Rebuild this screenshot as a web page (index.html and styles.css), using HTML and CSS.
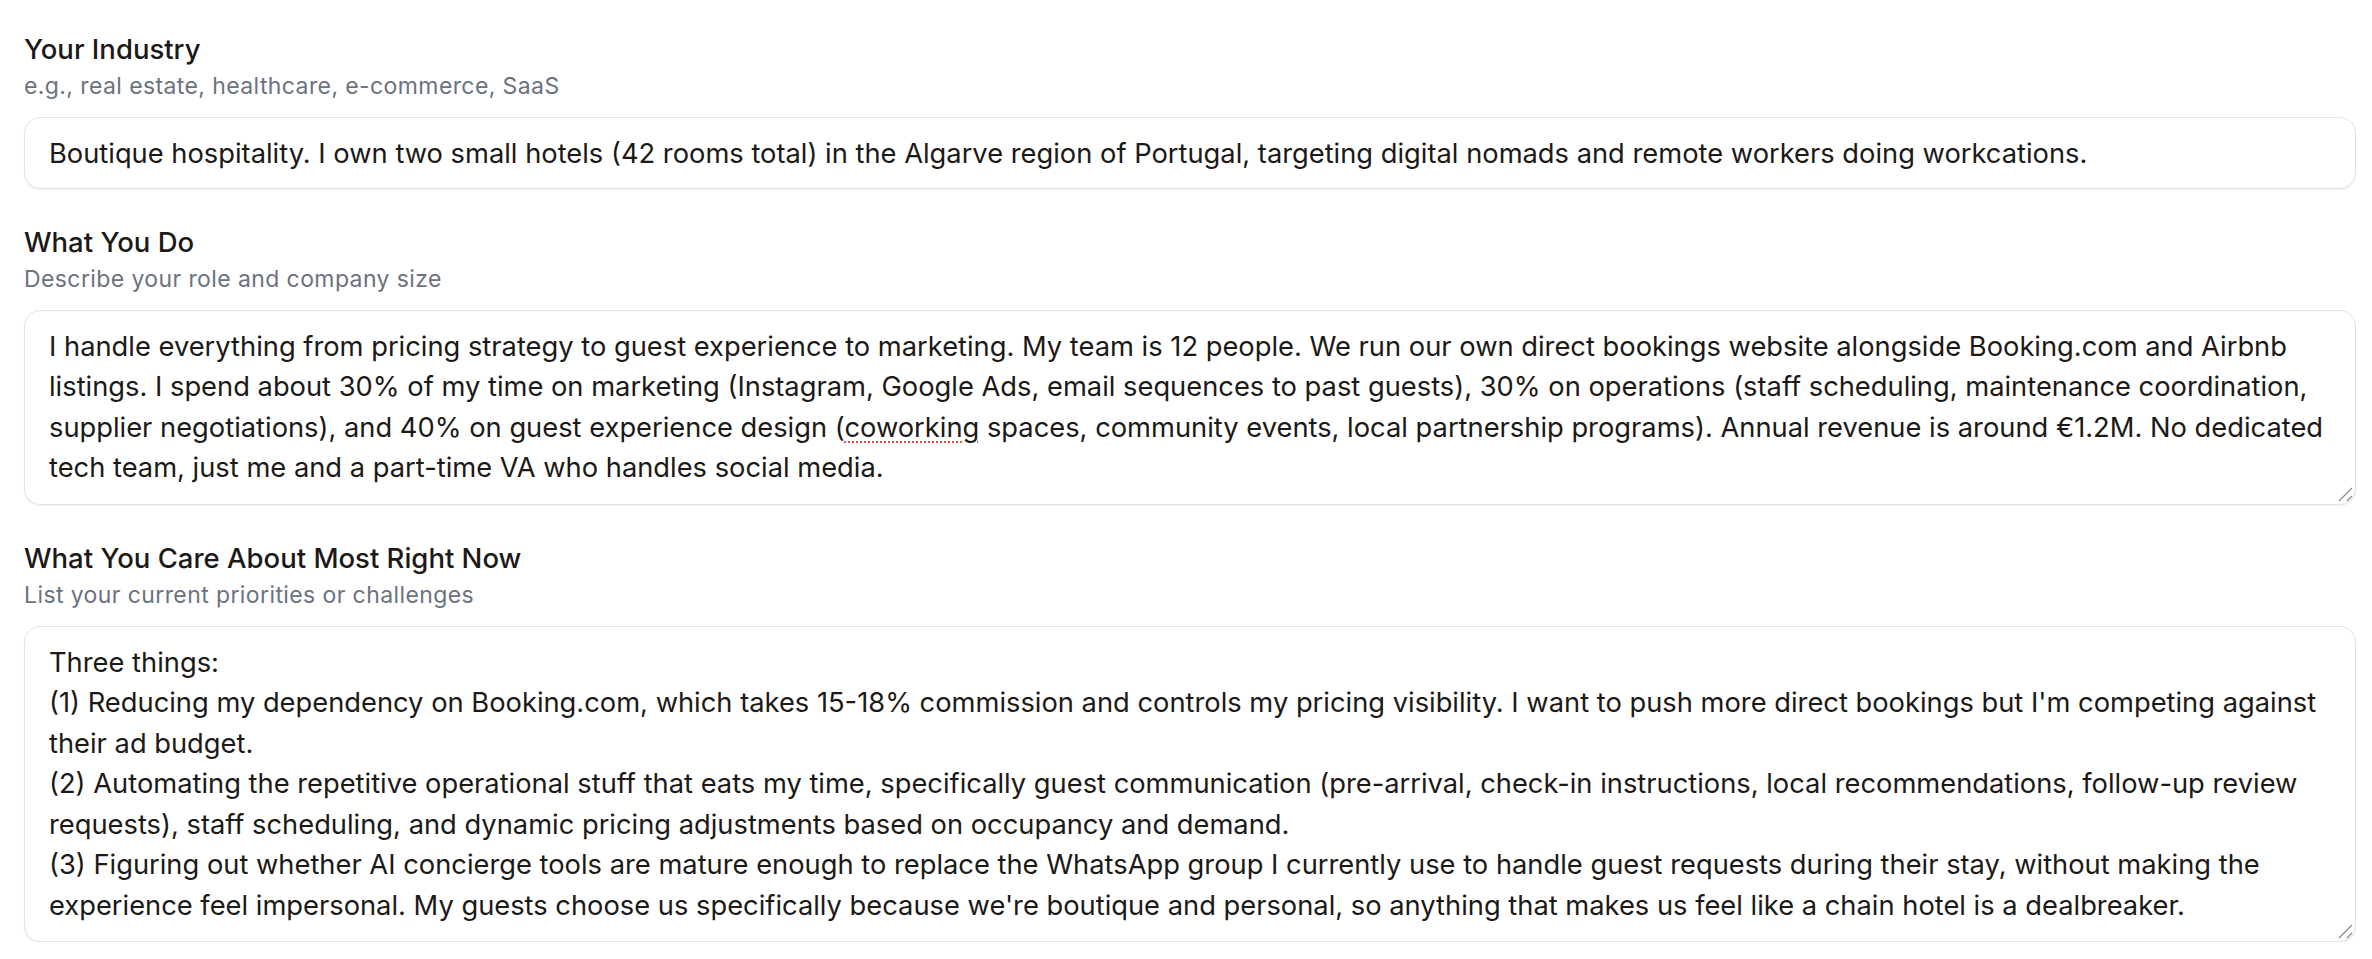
FILE: index.html
```html
<!DOCTYPE html>
<html lang="en">
<head>
    <meta charset="UTF-8">
    <meta name="viewport" content="width=device-width, initial-scale=1.0">
    <title>Your Profile</title>
    <link rel="stylesheet" href="styles.css">
</head>
<body>

<div class="form">
    <div class="field">
        <label class="field-label">Your Industry</label>
        <p class="field-hint">e.g., real estate, healthcare, e-commerce, SaaS</p>
        <div class="field-box">Boutique hospitality. I own two small hotels (42 rooms total) in the Algarve region of Portugal, targeting digital nomads and remote workers doing workcations.</div>
    </div>

    <div class="field">
        <label class="field-label">What You Do</label>
        <p class="field-hint">Describe your role and company size</p>
        <div class="field-box area">
            <div class="line">I handle everything from pricing strategy to guest experience to marketing. My team is 12 people. We run our own direct bookings website alongside Booking.com and Airbnb</div>
            <div class="line">listings. I spend about 30% of my time on marketing (Instagram, Google Ads, email sequences to past guests), 30% on operations (staff scheduling, maintenance coordination,</div>
            <div class="line">supplier negotiations), and 40% on guest experience design (<span class="typo">coworking</span> spaces, community events, local partnership programs). Annual revenue is around €1.2M. No dedicated</div>
            <div class="line">tech team, just me and a part-time VA who handles social media.</div>
            <svg class="grip" width="16" height="16" viewBox="0 0 16 16">
                <path d="M2 15 L15 2 M10 15 L15 10" stroke="#8a8a8a" stroke-width="1.2" fill="none"/>
            </svg>
        </div>
    </div>

    <div class="field">
        <label class="field-label">What You Care About Most Right Now</label>
        <p class="field-hint">List your current priorities or challenges</p>
        <div class="field-box area">
            <div class="line">Three things:</div>
            <div class="line">(1) Reducing my dependency on Booking.com, which takes 15-18% commission and controls my pricing visibility. I want to push more direct bookings but I'm competing against</div>
            <div class="line">their ad budget.</div>
            <div class="line">(2) Automating the repetitive operational stuff that eats my time, specifically guest communication (pre-arrival, check-in instructions, local recommendations, follow-up review</div>
            <div class="line">requests), staff scheduling, and dynamic pricing adjustments based on occupancy and demand.</div>
            <div class="line">(3) Figuring out whether AI concierge tools are mature enough to replace the WhatsApp group I currently use to handle guest requests during their stay, without making the</div>
            <div class="line">experience feel impersonal. My guests choose us specifically because we're boutique and personal, so anything that makes us feel like a chain hotel is a dealbreaker.</div>
            <svg class="grip" width="16" height="16" viewBox="0 0 16 16">
                <path d="M2 15 L15 2 M10 15 L15 10" stroke="#8a8a8a" stroke-width="1.2" fill="none"/>
            </svg>
        </div>
    </div>
</div>

</body>
</html>
```

FILE: styles.css
```css
* {
    margin: 0;
    padding: 0;
    box-sizing: border-box;
}
body {
    font-family: Inter, "Noto Sans", sans-serif;
    background-color: #fff;
    color: #1c1917;
    padding: 31px 16px 0 24px;
}
.field + .field {
    margin-top: 35px;
}
.field-label {
    display: block;
    font-size: 27.5px;
    font-weight: 500;
    line-height: 36px;
}
.field-hint {
    font-size: 23px;
    letter-spacing: 0.4px;
    line-height: 38px;
    color: #6b7280;
}
.field-box {
    position: relative;
    margin-top: 12px;
    padding: 16px 24px 13px;
    border: 1px solid #e3e3e3;
    border-radius: 16px;
    background-color: #fff;
    box-shadow: 0 1px 2px rgba(0, 0, 0, 0.06);
    font-size: 27.3px;
    line-height: 40.5px;
    white-space: nowrap;
}
.area {
    padding-bottom: 15px;
}
.typo {
    text-decoration: underline dotted #e5534b;
    text-decoration-thickness: 2px;
    text-underline-offset: 5px;
}
.grip {
    position: absolute;
    right: 2px;
    bottom: 2px;
}
```
